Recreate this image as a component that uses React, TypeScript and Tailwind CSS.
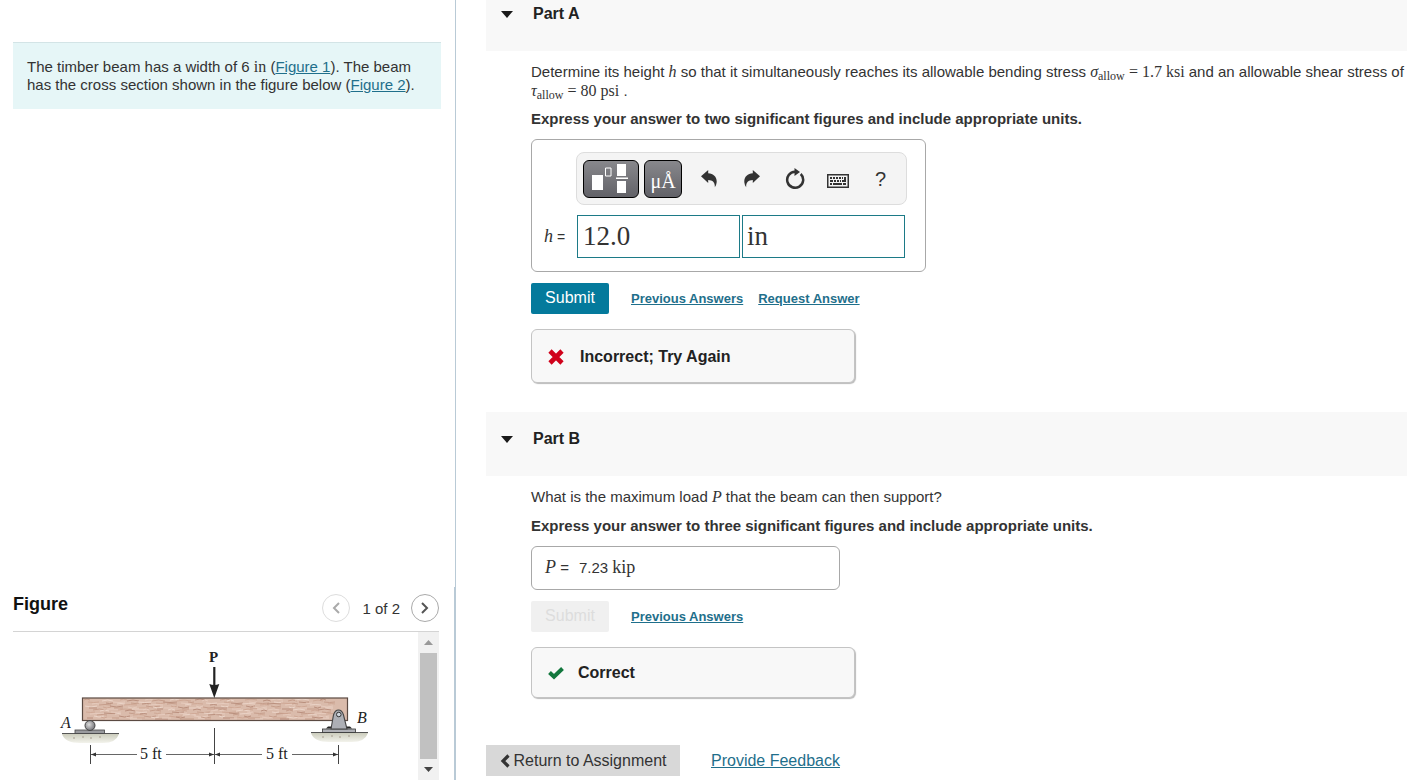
import React, { useState } from 'react';

interface ToolButton {
  label: string;
  icon: React.ReactNode;
}

const TOOLS: ToolButton[] = [
  {
    label: 'Undo',
    icon: (
      <svg width="16" height="18" viewBox="0 0 16 18" fill="#333">
        <path d="M0 6.2 7.2 0v3.2c5.600.3 9.200 4.200 8.400 9.600-.2 1.700-.8 3.200-1.800 4.400.3-4.200-1.600-7-6.600-7.200v3z" />
      </svg>
    ),
  },
  {
    label: 'Redo',
    icon: (
      <svg width="16" height="18" viewBox="0 0 16 18" fill="#333">
        <path d="M16 6.200 8.800 0v3.200C3.200 3.500-.4 7.400.4 12.800c.2 1.700.8 3.200 1.800 4.400-.3-4.200 1.600-7 6.600-7.200v3z" />
      </svg>
    ),
  },
  {
    label: 'Reset',
    icon: (
      <svg width="20" height="22" viewBox="0 0 20 22">
        <path d="M15.700 6A8 8 0 1 1 10 3.800" fill="none" stroke="#333" strokeWidth="2.500" />
        <path d="M9.500 0l5.500 4-5.500 4z" fill="#333" />
      </svg>
    ),
  },
  {
    label: 'Keyboard shortcuts',
    icon: (
      <svg width="22" height="14" viewBox="0 0 22 14" fill="#333" className="mt-1">
        <path fillRule="evenodd" d="M0 0h22v14H0zM1.500 1.500v11h19v-11z" />
        <path d="M3 3h2v2H3zM6 3h2v2H6zM9 3h2v2H9zM12 3h2v2h-2zM15 3h1v2h-1zM17 3h2v5h-4V6h2zM3 6h3v2H3zM7 6h2v2H7zM10 6h2v2h-2zM13 6h1v2h-1zM3 9h2v2H3zM6 9h9v2H6zM16 9h3v2h-3z" />
      </svg>
    ),
  },
  { label: 'Help', icon: <span className="text-xl leading-6">?</span> },
];

// Short strokes spread over the beam, one row every two units
const GRAIN = Array.from({ length: 190 }, (_, i) => {
  const row = i % 10;
  const col = Math.floor(i / 10);
  return {
    x: 84 + col * 13 + ((row * 37 + col * 5) % 11),
    y: 700 + row * 2 + (col % 2),
    len: 6 + ((i * 5) % 9),
    bend: ((i * 3) % 5) - 2,
    color: ['#c39a87', '#edd8cc', '#cda592', '#b58a78', '#e8cdbf'][(i * 7 + col) % 5],
  };
}).filter(g => g.x + g.len < 347);

function MathText({ children, italic = false }: { children: React.ReactNode; italic?: boolean }) {
  return (
    <span className={`font-['Liberation_Serif',serif] text-base leading-4 ${italic ? 'italic' : ''}`}>
      {children}
    </span>
  );
}

function Symbol({ children }: { children: React.ReactNode }) {
  return <span className="font-['Liberation_Serif',serif] text-lg leading-4 italic">{children}</span>;
}

function Subscripted({ symbol }: { symbol: string }) {
  return (
    <>
      <MathText italic>{symbol}</MathText>
      <sub className="bottom-[-3px] font-['Liberation_Serif',serif] text-[12px]">allow</sub>
    </>
  );
}

function BeamFigure() {
  return (
    <svg
      className="block w-full min-w-0 flex-1"
      viewBox="13 632 405 148"
      preserveAspectRatio="xMinYMin meet"
      role="img"
      aria-label="Simply supported beam with load P at midspan"
    >
      <defs>
        <linearGradient id="ground" x1="0" y1="0" x2="0" y2="1">
          <stop offset="0" stopColor="#cccdbd" />
          <stop offset="1" stopColor="#f3f3ec" />
        </linearGradient>
        <radialGradient id="roller" cx="0.4" cy="0.4" r="0.6">
          <stop offset="0" stopColor="#ddd" />
          <stop offset="1" stopColor="#77777c" />
        </radialGradient>
      </defs>

      {/* Beam */}
      <rect x="82.500" y="698" width="265" height="22.500" fill="#dabbab" />
      {GRAIN.map((g, i) => (
        <path
          key={i}
          d={`M${g.x} ${g.y}q${g.len / 2} ${g.bend} ${g.len} 0`}
          fill="none"
          stroke={g.color}
          strokeWidth="0.900"
        />
      ))}
      <rect x="82.500" y="698" width="265" height="22.500" fill="none" stroke="#5b4a42" strokeWidth="1.200" />

      {/* Load */}
      <path d="M214.300 667v20" stroke="#222" strokeWidth="2.200" />
      <path d="M209.300 684q5 2 10 0l-5 14z" fill="#222" />

      {/* Supports */}
      <path d="M62 734h57q-3 9-16 9H80q-15 0-18-9z" fill="url(#ground)" />
      <path d="M62 733.500h57" stroke="#555" strokeWidth="1.200" />
      <rect x="75" y="730" width="29.500" height="3.500" fill="#999a9e" stroke="#444" strokeWidth="0.800" />
      <circle cx="90" cy="725.500" r="5" fill="url(#roller)" stroke="#444" />
      <path d="M311 733h57q-3 9-16 9h-23q-15 0-18-9z" fill="url(#ground)" />
      <path d="M311 732.500h57" stroke="#555" strokeWidth="1.200" />
      <rect x="322.500" y="729" width="33" height="3.500" fill="#b0b1b6" stroke="#333" strokeWidth="0.800" />
      <path d="M326 728.500l2-2h3l2 2zM345 728.500l2-2h3l2 2z" fill="#222" />
      <path d="M331 729l2.500-14q1.500-5 5-5t5 5l3.500 14z" fill="#adafb5" stroke="#444" strokeWidth="1.100" />
      <circle cx="338.800" cy="714.500" r="2.300" fill="#cfd5dc" stroke="#333" />
      <path d="M73 738h2M82 737h2M90 738h2M99 737h2M322 737h2M331 736h2M339 737h2M348 736h2" stroke="#a69d90" />

      {/* Dimension lines */}
      <path d="M90.500 745v19M214.500 728v36M338.500 745v19" stroke="#444" />
      <path d="M91 754.500h46M166 754.500h96M292 754.500h46" stroke="#555" strokeWidth="0.900" />
      <path
        d="M91 754.500l5-2v4zM214 754.500l-5-2v4zM215 754.500l5-2v4zM338 754.500l-5-2v4z"
        fill="#333"
      />
      <g fill="#222" className="font-['Liberation_Serif',serif]">
        <text x="209" y="662" fontSize="15" fontWeight="bold">P</text>
        <text x="61" y="728" fontSize="16" fontStyle="italic">A</text>
        <text x="357" y="723" fontSize="16" fontStyle="italic">B</text>
        <text x="140" y="759" fontSize="16">5 ft</text>
        <text x="266" y="759" fontSize="16">5 ft</text>
      </g>
    </svg>
  );
}

function PartHeader({ title, className }: { title: string; className: string }) {
  return (
    <button type="button" className={`flex w-full items-center bg-[#f8f8f8] pl-[15px] text-left ${className}`}>
      <svg width="12" height="7" viewBox="0 0 12 7" fill="#1a1a1a">
        <path d="M0 0h12L6 7z" />
      </svg>
      <h2 className="ml-5 text-base leading-5 font-bold text-[#222]">{title}</h2>
    </button>
  );
}

function Feedback({ children, className }: { children: React.ReactNode; className: string }) {
  return (
    <div
      className={`flex w-[324px] items-center rounded-md border border-[#c4c4c4] bg-[#f8f8f8] pl-4 text-base font-bold text-[#222] shadow-[1px_1px_1px_#bbb] ${className}`}
    >
      {children}
    </div>
  );
}

const link = 'text-[#1f6f8b] underline';

export default function App() {
  const [value, setValue] = useState('12.0');
  const [units, setUnits] = useState('in');

  return (
    <div className="flex h-screen overflow-hidden bg-white font-['Liberation_Sans',Arial,sans-serif] text-[#333]">
      {/* Problem statement and figure */}
      <aside className="flex w-[456px] shrink-0 flex-col justify-between border-r border-[#b9cad6]">
        <div className="mt-[42px] mr-[14px] ml-[13px] border-t border-[#d3e4e6] bg-[#e6f6f7] pt-[15px] pr-4 pb-[15px] pl-[14px] text-[15px] leading-[18px]">
          The timber beam has a width of 6 <MathText>in</MathText> (
          <a href="#figure-1" className={link}>Figure 1</a>). The beam has the cross section shown in the figure
          below (<a href="#figure-2" className={link}>Figure 2</a>).
        </div>

        <section className="border-r border-[#b9cad6] pr-[15px] pl-[13px]">
          <div className="flex items-start justify-between border-b border-[#d4d4d4] pt-[7px] pb-[9px]">
            <h2 className="text-lg leading-5 font-bold text-[#111]">Figure</h2>
            <div className="flex items-center text-[15px]">
              <button
                type="button"
                disabled
                aria-label="Previous figure"
                className="flex size-7 items-center justify-center rounded-full border border-[#ddd]"
              >
                <svg width="8" height="12" viewBox="0 0 8 12" fill="none" stroke="#aaa" strokeWidth="2">
                  <path d="M7 1 2 6l5 5" />
                </svg>
              </button>
              <span className="mr-[11px] ml-3 pt-[3px]">1 of 2</span>
              <button
                type="button"
                aria-label="Next figure"
                className="flex size-7 items-center justify-center rounded-full border border-[#aaa]"
              >
                <svg width="8" height="12" viewBox="0 0 8 12" fill="none" stroke="#555" strokeWidth="2">
                  <path d="m1 1 5 5-5 5" />
                </svg>
              </button>
            </div>
          </div>
          <div className="flex h-[148px]">
            <BeamFigure />
            <div className="flex w-[21px] flex-col items-center bg-[#f1f1f1]">
              <button type="button" aria-label="Scroll up" className="flex h-[21px] w-full items-center justify-center">
                <svg width="9" height="5" viewBox="0 0 9 5" fill="#999">
                  <path d="M0 5h9L4.500 0z" />
                </svg>
              </button>
              <div className="w-[17px] flex-1 bg-[#c1c1c1]" />
              <button type="button" aria-label="Scroll down" className="flex h-[21px] w-full items-center justify-center">
                <svg width="9" height="5" viewBox="0 0 9 5" fill="#444">
                  <path d="M0 0h9L4.500 5z" />
                </svg>
              </button>
            </div>
          </div>
        </section>
      </aside>

      {/* Parts */}
      <main className="min-w-0 flex-1 pl-[30px]">
        <PartHeader title="Part A" className="pt-1 pb-[27px]" />
        <div className="pt-[11px] pl-[45px] text-[15px]">
          <p className="leading-[19px]">
            Determine its height <MathText italic>h</MathText> so that it simultaneously reaches its allowable bending
            stress <Subscripted symbol="σ" /> <MathText>= 1.7 ksi</MathText> and an allowable shear stress of{' '}
            <Subscripted symbol="τ" /> <MathText>= 80 psi</MathText> .
          </p>
          <p className="mt-[9px] leading-[19px] font-bold">
            Express your answer to two significant figures and include appropriate units.
          </p>

          <div className="mt-[11px] w-[395px] rounded-md border border-[#a8a8a8] p-3 pb-[13px]">
            <div className="ml-8 flex h-[53px] w-[331px] items-center rounded-lg border border-[#ddd] bg-[#f4f4f4] pl-[6px]">
              <button
                type="button"
                aria-label="Templates"
                className="flex h-[38px] w-14 items-center justify-center rounded-md border border-black bg-linear-to-b from-[#88888c] to-[#626268]"
              >
                <svg width="38" height="30" viewBox="0 0 38 30" fill="#fff">
                  <path d="M0 11h11v15H0zM25 0h9v12h-9zM25 17h9v12h-9zM24 13.500h12v1.500H24z" />
                  <path d="M13.500 4h5.500v8h-5.500z" fill="none" stroke="#fff" />
                </svg>
              </button>
              <button
                type="button"
                aria-label="Units"
                className="mr-[5px] ml-[5px] h-[38px] w-[38px] rounded-md border border-black bg-linear-to-b from-[#88888c] to-[#626268] pt-1 font-['Liberation_Serif',serif] text-xl leading-7 text-white"
              >
                μÅ
              </button>
              {TOOLS.map(tool => (
                <button
                  key={tool.label}
                  type="button"
                  aria-label={tool.label}
                  className="flex h-[38px] w-[43px] items-center justify-center"
                >
                  {tool.icon}
                </button>
              ))}
            </div>
            <div className="mt-[10px] flex items-center">
              <label htmlFor="height-value" className="w-[33px] text-sm">
                <Symbol>h</Symbol> =
              </label>
              <input
                id="height-value"
                value={value}
                onChange={e => setValue(e.target.value)}
                className="h-[43px] w-[163px] border border-[#1c7a87] pl-[5px] font-['Liberation_Serif',serif] text-[27px] outline-none"
              />
              <input
                aria-label="Units of height"
                value={units}
                onChange={e => setUnits(e.target.value)}
                className="ml-[2px] h-[43px] w-[163px] border border-[#1c7a87] pl-1 font-['Liberation_Serif',serif] text-[27px] outline-none"
              />
            </div>
          </div>

          <div className="mt-[11px] flex items-center text-[13px] font-bold">
            <button
              type="button"
              className="mr-[22px] h-[31px] w-[78px] rounded-xs bg-[#047a9c] pb-[2px] text-base font-normal text-white"
            >
              Submit
            </button>
            <a href="#previous-a" className={`mr-[15px] ${link}`}>Previous Answers</a>
            <a href="#request-a" className={link}>Request Answer</a>
          </div>

          <Feedback className="mt-[15px] h-[54px] pt-[2px]">
            <svg width="16" height="16" viewBox="0 0 16 16" className="mr-4" stroke="#d0021b" strokeWidth="4.600">
              <path d="M2 2l12 12M14 2 2 14" />
            </svg>
            Incorrect; Try Again
          </Feedback>
        </div>

        <PartHeader title="Part B" className="mt-[29px] pt-[17px] pb-[27px]" />
        <div className="pt-[11px] pl-[45px] text-[15px]">
          <p className="leading-[19px]">
            What is the maximum load <MathText italic>P</MathText> that the beam can then support?
          </p>
          <p className="mt-[10px] leading-[19px] font-bold">
            Express your answer to three significant figures and include appropriate units.
          </p>

          <div className="mt-[11px] flex h-11 w-[309px] items-center rounded-md border border-[#a8a8a8] pl-[13px]">
            <span className="mr-[10px]">
              <Symbol>P</Symbol> =
            </span>
            <span>
              7.23 <span className="font-['Liberation_Serif',serif] text-lg leading-4">kip</span>
            </span>
          </div>

          <div className="mt-[11px] flex items-center text-[13px] font-bold">
            <button
              type="button"
              disabled
              className="mr-[22px] h-[31px] w-[78px] rounded-xs bg-[#f0f0f0] pb-[2px] text-base font-normal text-[#ddd]"
            >
              Submit
            </button>
            <a href="#previous-b" className={link}>Previous Answers</a>
          </div>

          <Feedback className="mt-[15px] h-[51px]">
            <svg width="16" height="14" viewBox="0 0 16 14" className="mr-[14px]" fill="none" stroke="#12773d" strokeWidth="4">
              <path d="M1.500 6.500 6 10.800 14.500 2.500" />
            </svg>
            Correct
          </Feedback>
        </div>

        <div className="mt-[47px] flex items-center text-base">
          <button type="button" className="mr-[31px] flex h-[31px] w-[194px] items-center justify-center bg-[#d8d8d8]">
            <svg width="10" height="14" viewBox="0 0 10 14" className="mr-1" fill="none" stroke="#333" strokeWidth="3.200">
              <path d="M8.500 1.500 3 7l5.500 5.500" />
            </svg>
            Return to Assignment
          </button>
          <a href="#feedback" className={link}>Provide Feedback</a>
        </div>
      </main>
    </div>
  );
}
